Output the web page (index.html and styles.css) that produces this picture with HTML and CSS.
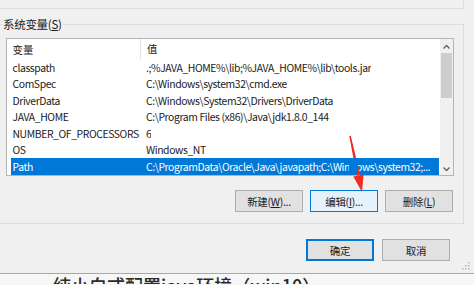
FILE: index.html
```html
<!DOCTYPE html>
<html lang="zh">
<head>
<meta charset="utf-8">
<link rel="stylesheet" href="styles.css">
</head>
<body>
<div class="dialog">
  <div class="top-strip"></div>
  <fieldset class="group">
    <legend class="group-label">系统变量(<u>S</u>)</legend>
    <div class="listbox">
      <div class="rows">
        <div class="row head"><span class="c1">变量</span><span class="c2">值</span></div>
        <div class="row"><span class="c1">classpath</span><span class="c2">.;%JAVA_HOME%\lib;%JAVA_HOME%\lib\tools.jar</span></div>
        <div class="row"><span class="c1">ComSpec</span><span class="c2">C:\Windows\system32\cmd.exe</span></div>
        <div class="row"><span class="c1">DriverData</span><span class="c2">C:\Windows\System32\Drivers\DriverData</span></div>
        <div class="row"><span class="c1">JAVA_HOME</span><span class="c2">C:\Program Files (x86)\Java\jdk1.8.0_144</span></div>
        <div class="row"><span class="c1">NUMBER_OF_PROCESSORS</span><span class="c2">6</span></div>
        <div class="row"><span class="c1">OS</span><span class="c2">Windows_NT</span></div>
        <div class="row sel"><span class="c1">Path</span><span class="c2">C:\ProgramData\Oracle\Java\javapath;C:\Windows\system32;...</span></div>
      </div>
      <div class="scrollbar">
        <svg class="arr" width="13" height="12" viewBox="0 0 13 12"><path d="M3.5 7.5 L6.5 4.5 L9.5 7.5" fill="none" stroke="#606060" stroke-width="1.3"/></svg>
        <div class="track"><div class="thumb"></div></div>
        <svg class="arr" width="13" height="12" viewBox="0 0 13 12"><path d="M3.5 4.5 L6.5 7.5 L9.5 4.5" fill="none" stroke="#606060" stroke-width="1.3"/></svg>
      </div>
    </div>
    <div class="btn-row">
      <button class="btn">新建(<u>W</u>)...</button>
      <button class="btn focus">编辑(<u>I</u>)...</button>
      <button class="btn">删除(<u>L</u>)</button>
    </div>
  </fieldset>
  <div class="footer">
    <button class="btn default">确定</button>
    <button class="btn">取消</button>
  </div>
  <svg class="grip" width="8" height="8" viewBox="0 0 8 8"><g fill="#b8b8b8"><rect x="6" y="0" width="1.5" height="1.5"/><rect x="3" y="3" width="1.5" height="1.5"/><rect x="6" y="3" width="1.5" height="1.5"/><rect x="0" y="6" width="1.5" height="1.5"/><rect x="3" y="6" width="1.5" height="1.5"/><rect x="6" y="6" width="1.5" height="1.5"/></g></svg>
</div>
<div class="page">
  <div class="page-title">纯小白式配置java环境（win10）</div>
</div>
<svg class="arrow" width="474" height="285" viewBox="0 0 474 285">
  <polygon points="349.3,136 350.8,135.8 360.1,175 356.6,175.6" fill="#ee2d24"/>
  <polygon points="362,192 353.3,176.6 363.6,174.4" fill="#ee2d24"/>
  <rect x="349" y="158" width="9" height="16" fill="#0078d7"/>
</svg>
</body>
</html>
```
FILE: styles.css
```css
* { box-sizing: border-box; }
html, body { margin: 0; padding: 0; }
body {
  width: 474px;
  height: 285px;
  overflow: hidden;
  background: #f7f7f7;
  font-family: "Noto Sans CJK SC", "Noto Sans", sans-serif;
  color: #1a1a1a;
  position: relative;
}
.dialog {
  position: relative;
  height: 274px;
  background: #f0f0f0;
  border-bottom: 1px solid #a8a8a8;
  display: flex;
  flex-direction: column;
}
.top-strip {
  height: 9px;
  width: 464px;
  border-bottom: 1px solid #dedede;
  border-right: 1px solid #dedede;
  flex: none;
}
.group {
  margin: 8px 0 0 0;
  padding: 0;
  width: 464px;
  border: 1px solid #dcdcdc;
  border-left: none;
  flex: none;
}
.group-label {
  margin-left: 2px;
  padding: 0 1px;
  font-size: 11.5px;
  line-height: 14px;
  letter-spacing: -0.3px;
  color: #1a1a1a;
}
.group-label u { text-decoration: underline; }
.listbox {
  margin: 7px 0 0 6px;
  width: 448px;
  height: 138px;
  border: 1px solid #b4b4b4;
  background: #fff;
  display: flex;
}
.rows {
  flex: 1;
  padding-left: 4px;
  min-width: 0;
}
.row {
  display: flex;
  height: 16.5px;
  align-items: center;
  font-size: 10.4px;
  letter-spacing: -0.4px;
  white-space: nowrap;
  color: #1a1a1a;
}
.row.head {
  height: 20px;
  letter-spacing: 0;
}
.row .c1 {
  width: 129px;
  padding-left: 1.5px;
  flex: none;
}
.row .c2 {
  padding-left: 6px;
  overflow: hidden;
}
.row.head .c2 {
  border-left: 1px solid #e3e3e3;
  height: 20px;
  line-height: 20px;
}
.row.sel {
  background: #0078d7;
  color: #fff;
}
.scrollbar {
  width: 13px;
  flex: none;
  background: #f0f0f0;
  display: flex;
  flex-direction: column;
  margin-left: 1px;
}
.arr { flex: none; display: block; margin-top: 2px; }
.track { flex: 1; padding: 0 1px; }
.thumb {
  margin-top: 0;
  height: 45px;
  background: #cdcdcd;
}
.btn-row {
  display: flex;
  justify-content: flex-end;
  gap: 7px;
  margin: 14px 10px 11px 0;
}
.btn {
  width: 68px;
  height: 22px;
  padding: 0;
  font-family: "Noto Sans CJK SC", "Noto Sans", sans-serif;
  font-size: 10.5px;
  letter-spacing: -0.3px;
  color: #1a1a1a;
  background: #e1e1e1;
  border: 1px solid #adadad;
  border-radius: 0;
}
.btn u { text-decoration: underline; }
.btn.focus {
  background: #e5f1fb;
  border-color: #0078d7;
}
.btn.default {
  border: 2px solid #0078d7;
}
.footer {
  display: flex;
  justify-content: flex-end;
  gap: 8px;
  margin: 15px 24px 0 0;
}
.grip {
  position: absolute;
  right: 4px;
  bottom: 3px;
}
.page {
  height: 10px;
  overflow: hidden;
  padding-left: 53px;
}
.page-title {
  font-family: "Noto Sans CJK SC", sans-serif;
  font-size: 18px;
  font-weight: 500;
  line-height: 18px;
  margin-top: 2px;
  color: #2b2b2b;
  white-space: nowrap;
}
.arrow {
  position: absolute;
  left: 0;
  top: 0;
  pointer-events: none;
}
```
